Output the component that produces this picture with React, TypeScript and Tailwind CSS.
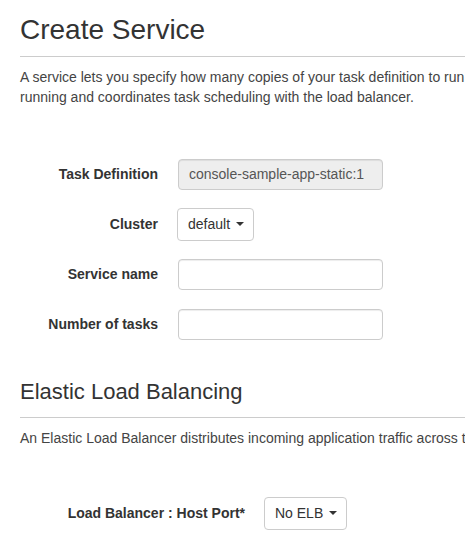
function Caret() {
  return <span className="inline-block h-0 w-0 border-x-[4px] border-t-[4px] border-x-transparent border-t-[#333]" />;
}

function Row({ label, labelWidth = "w-[138px]", children }: { label: string; labelWidth?: string; children: React.ReactNode }) {
  return (
    <div className="flex h-[50px] items-center gap-[20px]">
      <label className={`${labelWidth} shrink-0 text-right text-[14px] font-bold text-[#333]`}>{label}</label>
      {children}
    </div>
  );
}

function Dropdown({ value }: { value: string }) {
  return (
    <button className="-ml-px flex h-[33px] items-center gap-[6px] rounded-[4px] border border-[#ccc] bg-white pl-[10px] pr-[9px] text-[14px] text-[#333]">
      {value}
      <Caret />
    </button>
  );
}

function TextInput({ value, disabled }: { value?: string; disabled?: boolean }) {
  return (
    <input
      readOnly
      value={value ?? ""}
      className={`h-[31px] w-[205px] rounded-[4px] border border-[#ccc] px-[10px] text-[14px] text-[#555] shadow-[inset_0_1px_1px_rgba(0,0,0,0.075)] outline-none ${
        disabled ? "bg-[#eee]" : "bg-white"
      }`}
    />
  );
}

export default function App() {
  return (
    <main className="min-h-screen w-full overflow-hidden bg-white pl-[20px] pt-[14px] font-['Liberation_Sans',Arial,sans-serif] text-[#333]">
      <h1 className="text-[28px] leading-[32px] font-normal">Create Service</h1>
      <hr className="mt-[10px] border-t border-[#ccc]" />
      <p className="mt-[10px] whitespace-nowrap text-[14px] leading-[20px] text-[#444]">
        A service lets you specify how many copies of your task definition to run and maintain in a cluster, and Amazon ECS keeps that number of tasks
        <br />
        running and coordinates task scheduling with the load balancer.
      </p>

      <div className="mt-[42px] flex flex-col">
        <Row label="Task Definition">
          <TextInput value="console-sample-app-static:1" disabled />
        </Row>
        <Row label="Cluster">
          <Dropdown value="default" />
        </Row>
        <Row label="Service name">
          <TextInput />
        </Row>
        <Row label="Number of tasks">
          <TextInput />
        </Row>
      </div>

      <h2 className="mt-[30px] text-[22px] leading-[26px] font-normal">Elastic Load Balancing</h2>
      <hr className="mt-[12px] border-t border-[#ccc]" />
      <p className="mt-[10px] whitespace-nowrap text-[14px] leading-[20px] text-[#444]">
        An Elastic Load Balancer distributes incoming application traffic across the tasks running in your service.
      </p>

      <div className="mt-[40px]">
        <Row label="Load Balancer : Host Port*" labelWidth="w-[225px]">
          <Dropdown value="No ELB" />
        </Row>
      </div>
    </main>
  );
}
